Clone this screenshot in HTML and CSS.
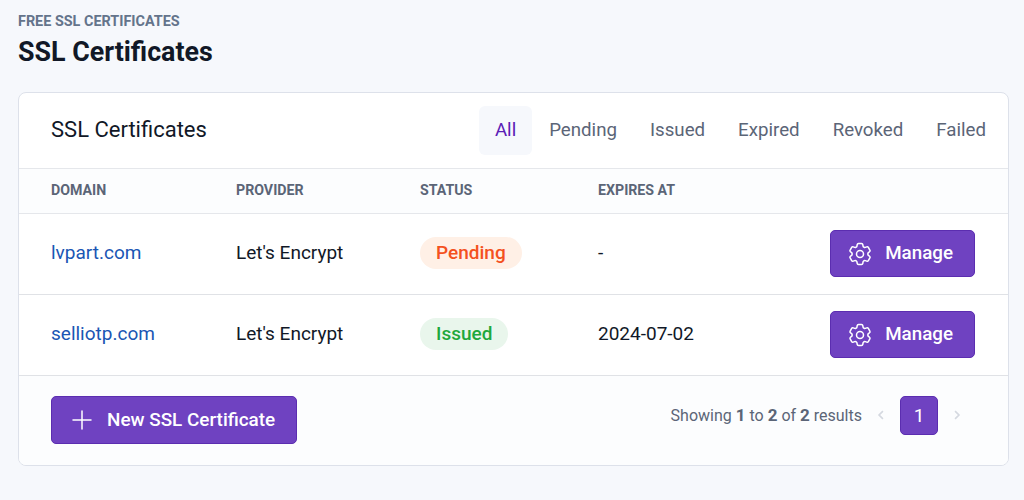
FILE: index.html
```html
<!DOCTYPE html>
<html lang="en">
<head>
<meta charset="utf-8">
<title>SSL Certificates</title>
<link rel="stylesheet" href="styles.css">
</head>
<body>
<div class="page-head">
  <div class="eyebrow">FREE SSL CERTIFICATES</div>
  <h1 class="page-title">SSL Certificates</h1>
</div>
<section class="card">
  <header class="card-head">
    <h2 class="card-title">SSL Certificates</h2>
    <nav class="tabs">
      <a class="tab active">All</a>
      <a class="tab">Pending</a>
      <a class="tab">Issued</a>
      <a class="tab">Expired</a>
      <a class="tab">Revoked</a>
      <a class="tab">Failed</a>
    </nav>
  </header>
  <table class="table">
    <thead>
      <tr>
        <th class="c-domain">DOMAIN</th>
        <th class="c-provider">PROVIDER</th>
        <th class="c-status">STATUS</th>
        <th class="c-expires">EXPIRES AT</th>
        <th class="c-action"></th>
      </tr>
    </thead>
    <tbody>
      <tr>
        <td class="c-domain"><a class="link">lvpart.com</a></td>
        <td>Let's Encrypt</td>
        <td><span class="badge pending">Pending</span></td>
        <td>-</td>
        <td class="c-action">
          <a class="btn btn-manage">
            <svg class="ico-gear" viewBox="0 0 24 24" fill="none" stroke="currentColor" stroke-width="1.3" stroke-linecap="round" stroke-linejoin="round"><path d="M9.594 3.94c.09-.542.56-.94 1.11-.94h2.593c.55 0 1.02.398 1.11.94l.213 1.281c.063.374.313.686.645.87.074.04.147.083.22.127.325.196.72.257 1.075.124l1.217-.456a1.125 1.125 0 0 1 1.37.49l1.296 2.247a1.125 1.125 0 0 1-.26 1.431l-1.003.827c-.293.241-.438.613-.43.992a7.723 7.723 0 0 1 0 .255c-.008.378.137.75.43.991l1.004.827c.424.35.534.955.26 1.43l-1.298 2.247a1.125 1.125 0 0 1-1.369.491l-1.217-.456c-.355-.133-.75-.072-1.076.124a6.47 6.47 0 0 1-.22.128c-.331.183-.581.495-.644.869l-.213 1.281c-.09.543-.56.94-1.11.94h-2.594c-.55 0-1.019-.398-1.11-.94l-.213-1.281c-.062-.374-.312-.686-.644-.87a6.52 6.52 0 0 1-.22-.127c-.325-.196-.72-.257-1.076-.124l-1.217.456a1.125 1.125 0 0 1-1.369-.49l-1.297-2.247a1.125 1.125 0 0 1 .26-1.431l1.004-.827c.292-.24.437-.613.43-.991a6.932 6.932 0 0 1 0-.255c.007-.38-.138-.751-.43-.992l-1.004-.827a1.125 1.125 0 0 1-.26-1.43l1.297-2.247a1.125 1.125 0 0 1 1.37-.491l1.216.456c.356.133.751.072 1.076-.124.072-.044.146-.086.22-.128.332-.183.582-.495.644-.869l.214-1.28Z"/><path d="M15 12a3 3 0 1 1-6 0 3 3 0 0 1 6 0Z"/></svg>
            <span class="btn-label">Manage</span>
          </a>
        </td>
      </tr>
      <tr>
        <td class="c-domain"><a class="link">selliotp.com</a></td>
        <td>Let's Encrypt</td>
        <td><span class="badge issued">Issued</span></td>
        <td>2024-07-02</td>
        <td class="c-action">
          <a class="btn btn-manage">
            <svg class="ico-gear" viewBox="0 0 24 24" fill="none" stroke="currentColor" stroke-width="1.3" stroke-linecap="round" stroke-linejoin="round"><path d="M9.594 3.94c.09-.542.56-.94 1.11-.94h2.593c.55 0 1.02.398 1.11.94l.213 1.281c.063.374.313.686.645.87.074.04.147.083.22.127.325.196.72.257 1.075.124l1.217-.456a1.125 1.125 0 0 1 1.37.49l1.296 2.247a1.125 1.125 0 0 1-.26 1.431l-1.003.827c-.293.241-.438.613-.43.992a7.723 7.723 0 0 1 0 .255c-.008.378.137.75.43.991l1.004.827c.424.35.534.955.26 1.43l-1.298 2.247a1.125 1.125 0 0 1-1.369.491l-1.217-.456c-.355-.133-.75-.072-1.076.124a6.47 6.47 0 0 1-.22.128c-.331.183-.581.495-.644.869l-.213 1.281c-.09.543-.56.94-1.11.94h-2.594c-.55 0-1.019-.398-1.11-.94l-.213-1.281c-.062-.374-.312-.686-.644-.87a6.52 6.52 0 0 1-.22-.127c-.325-.196-.72-.257-1.076-.124l-1.217.456a1.125 1.125 0 0 1-1.369-.49l-1.297-2.247a1.125 1.125 0 0 1 .26-1.431l1.004-.827c.292-.24.437-.613.43-.991a6.932 6.932 0 0 1 0-.255c.007-.38-.138-.751-.43-.992l-1.004-.827a1.125 1.125 0 0 1-.26-1.43l1.297-2.247a1.125 1.125 0 0 1 1.37-.491l1.216.456c.356.133.751.072 1.076-.124.072-.044.146-.086.22-.128.332-.183.582-.495.644-.869l.214-1.28Z"/><path d="M15 12a3 3 0 1 1-6 0 3 3 0 0 1 6 0Z"/></svg>
            <span class="btn-label">Manage</span>
          </a>
        </td>
      </tr>
    </tbody>
  </table>
  <footer class="card-foot">
    <a class="btn btn-new">
      <svg class="ico-plus" viewBox="0 0 24 24" fill="none" stroke="currentColor" stroke-width="1.5" stroke-linecap="round"><path d="M12 3v18M3 12h18"/></svg>
      <span>New SSL Certificate</span>
    </a>
    <div class="pager">
      <span class="summary">Showing <b>1</b> to <b>2</b> of <b>2</b> results</span>
      <svg class="chev" viewBox="0 0 10 14" fill="none" stroke="currentColor" stroke-width="1.3"><path d="M6.5 4 3.5 7l3 3"/></svg>
      <span class="page-num">1</span>
      <svg class="chev" viewBox="0 0 10 14" fill="none" stroke="currentColor" stroke-width="1.3"><path d="m3.5 4 3 3-3 3"/></svg>
    </div>
  </footer>
</section>
</body>
</html>
```

FILE: styles.css
```css
* { box-sizing: border-box; }
html, body { margin: 0; }
body {
  height: 500px;
  padding: 14px 15px 0 18px;
  background: #f6f8fc;
  font-family: Roboto, "Liberation Sans", sans-serif;
  color: #111827;
  overflow: hidden;
}
.eyebrow {
  font-size: 14.4px;
  line-height: 15px;
  font-weight: 700;
  color: #64748b;
}
.page-title {
  margin: 3px 0 0;
  font-size: 26.8px;
  line-height: 40px;
  font-weight: 700;
  color: #111827;
}
.card {
  margin-top: 20px;
  height: 374px;
  background: #fff;
  border: 1px solid #dde1ea;
  border-radius: 8px;
  overflow: hidden;
}
.card-head {
  display: flex;
  align-items: center;
  justify-content: space-between;
  height: 76px;
  padding: 0 6px 1px 32px;
  border-bottom: 1px solid #e5e7eb;
}
.card-title {
  margin: 0 0 2px;
  font-size: 22px;
  font-weight: 400;
  color: #111827;
}
.tabs { display: flex; gap: 1px; }
.tab {
  display: block;
  padding: 0 16px 1px;
  font-size: 18.7px;
  line-height: 48px;
  color: #5b6577;
  border-radius: 6px;
}
.tab.active {
  background: #f6f8fc;
  color: #5b21b6;
}
.table {
  width: 100%;
  table-layout: fixed;
  border-collapse: collapse;
}
.table th {
  height: 44px;
  padding: 0 0 2px;
  background: #fcfdfe;
  text-align: left;
  font-size: 14.2px;
  font-weight: 700;
  color: #5b6577;
  border-bottom: 1px solid #e5e7eb;
}
.table td {
  height: 81px;
  padding: 0 0 2px;
  font-size: 19px;
  color: #111827;
  border-bottom: 1px solid #e0e2e6;
}
.c-domain { width: 217px; padding-left: 32px !important; }
.c-provider { width: 184px; }
.c-status { width: 178px; }
.c-expires { width: 232px; }
.table .c-action { text-align: right; padding: 0 33px 0 0; }
.link { color: #1a56b4; }
.badge {
  display: inline-block;
  padding: 0 16px;
  border-radius: 16px;
  font-size: 19px;
  font-weight: 500;
  line-height: 32px;
}
.pending { background: #fff0e6; color: #f4511e; }
.issued { background: #e9f6ec; color: #1fa83c; }
.btn {
  display: inline-flex;
  align-items: center;
  height: 47px;
  background: #6f42c1;
  border: 1px solid #5b2db0;
  border-radius: 5px;
  color: #fff;
  font-size: 18.8px;
  font-weight: 500;
}
.btn-label { padding-bottom: 2px; }
.btn-manage { padding: 0 21px 0 15px; gap: 11px; }
.btn-new { height: 48px; padding: 0 21px 0 18px; gap: 13px; font-size: 18.9px; }
.ico-gear { width: 28px; height: 28px; flex: none; }
.ico-plus { width: 24px; height: 24px; flex: none; }
.card-foot {
  display: flex;
  align-items: flex-start;
  justify-content: space-between;
  height: 90px;
  padding: 20px 44px 0 32px;
  background: #fcfdfe;
}
.pager { display: flex; align-items: center; color: #5b6577; }
.summary { font-size: 16px; margin-right: 12px; }
.summary b { font-weight: 700; font-size: 17px; }
.chev { width: 14px; height: 18px; color: #d5d9e0; }
.page-num {
  display: block;
  width: 38px;
  height: 39px;
  margin: 0 12px;
  background: #6f42c1;
  border: 1px solid #5b2db0;
  border-radius: 5px;
  color: #fff;
  font-size: 19px;
  line-height: 37px;
  text-align: center;
}
```
